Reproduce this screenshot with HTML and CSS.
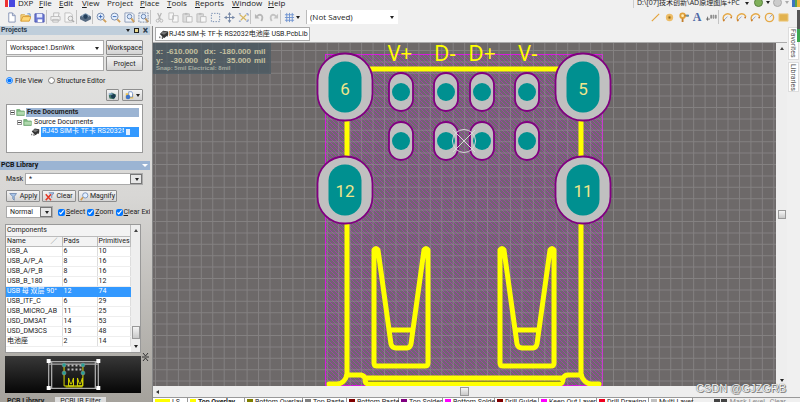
FILE: index.html
```html
<!DOCTYPE html>
<html lang="zh">
  <head>
    <meta charset="utf-8" />
    <title>PCB Library</title>
    <link rel="stylesheet" href="styles.css">
  </head>
  <body>
    <!-- icons -->
    <svg class="defs" width="0" height="0">
      <symbol id="i-new" viewBox="0 0 12 12"><path d="M3 1h4l3 3v7H3z" fill="#fff" stroke="#8291b5"/><path d="M7 1v3h3" fill="none" stroke="#8291b5"/></symbol>
      <symbol id="i-open" viewBox="0 0 12 12"><path d="M1 10V3h4l1 1h4v2" fill="#f5d98a" stroke="#d9a441"/><path d="M1 10l2-5h9l-2 5z" fill="#ffd777" stroke="#d79a32"/><path d="M8 2h3v3" fill="none" stroke="#5b8ccb"/></symbol>
      <symbol id="i-save" viewBox="0 0 12 12"><path d="M1 2h9l1 1v8H1z" fill="#6c79d4" stroke="#4a55ae"/><path d="M3 2h6v4H3z" fill="#e6eaff"/><path d="M4 8h5v3H4z" fill="#fff"/></symbol>
      <symbol id="i-print" viewBox="0 0 12 12"><path d="M4 5V1h6L9 5M1 5h10v4H1zM3 8h6v3H3z" fill="#f5f5f5" stroke="#b9b9b9"/></symbol>
      <symbol id="i-preview" viewBox="0 0 12 12"><path d="M1 1h6l2 2v8H1z" fill="#f7f7f7" stroke="#c0c0c0"/><circle cx="7" cy="7" r="2.5" fill="#eee" stroke="#aaa"/><path d="M9 9l2 2" stroke="#aaa" stroke-width="1.5"/></symbol>
      <symbol id="i-layers" viewBox="0 0 12 12"><path d="M0 5l6-3 6 3v3l-6 3-6-3z" fill="#566b82"/><path d="M1 4l5-3 5 3-5 3z" fill="#8fa8c0"/><circle cx="6" cy="5" r="2.5" fill="#24405c"/></symbol>
      <symbol id="i-zin" viewBox="0 0 12 12"><circle cx="5" cy="5" r="3.8" fill="#e6f1ff" stroke="#7186aa"/><path d="M3 5h4M5 3v4" stroke="#3967b5"/><path d="M8 8l3 3" stroke="#d0a05a" stroke-width="2"/></symbol>
      <symbol id="i-zout" viewBox="0 0 12 12"><circle cx="5" cy="5" r="3.8" fill="#e6f1ff" stroke="#7186aa"/><path d="M3 5h4" stroke="#3967b5"/><path d="M8 8l3 3" stroke="#d0a05a" stroke-width="2"/></symbol>
      <symbol id="i-zfit" viewBox="0 0 12 12"><path d="M1 1h8l2 2v8H1z" fill="#eef3fa" stroke="#8c9cba"/><circle cx="6" cy="5" r="2.5" fill="#dbe9ff" stroke="#6580aa"/><path d="M8 7l3 4" stroke="#d0a05a" stroke-width="2"/></symbol>
      <symbol id="i-zsel" viewBox="0 0 12 12"><path d="M1 1h10v10H1z" fill="#eef3fa" stroke="#7687a5" stroke-dasharray="2 1"/><circle cx="6" cy="5" r="2.5" fill="#dbe9ff" stroke="#6580aa"/><path d="M8 7l3 4" stroke="#b99566" stroke-width="2"/></symbol>
      <symbol id="i-cut" viewBox="0 0 12 12"><path d="M4 1l3 7M8 1L5 8" stroke="#b5b5b5" stroke-width="1.3"/><circle cx="4" cy="9.500" r="1.6" fill="none" stroke="#b5b5b5"/><circle cx="8" cy="9.500" r="1.6" fill="none" stroke="#b5b5b5"/></symbol>
      <symbol id="i-copy" viewBox="0 0 12 12"><path d="M1 1h5v7H1zM5 4h6v7H5z" fill="#f7f7f7" stroke="#c0c0c0"/></symbol>
      <symbol id="i-paste" viewBox="0 0 12 12"><path d="M1 2h7v9H1z" fill="#ddd" stroke="#bcbcbc"/><path d="M5 5h6v6H5z" fill="#f8f8f8" stroke="#bcbcbc"/><path d="M3 1h3v2H3z" fill="#bbb"/></symbol>
      <symbol id="i-sel" viewBox="0 0 12 12"><path d="M1.500 1.500h9v9h-9z" fill="none" stroke="#6d87ad" stroke-dasharray="1.500 1.500"/></symbol>
      <symbol id="i-move" viewBox="0 0 12 12"><path d="M6 1v10M1 6h10" stroke="#7587a5"/><path d="M6 0l2 3H4zM6 12l2-3H4zM0 6l3-2v4zM12 6L9 4v4z" fill="#7587a5"/></symbol>
      <symbol id="i-desel" viewBox="0 0 12 12"><path d="M2 3l7 6M9 3L3 9" stroke="#d7b65e" stroke-width="1.2"/><path d="M1 2h2M9 2h2v2M9 10h2V8M1 10h2" fill="none" stroke="#6f87bb"/></symbol>
      <symbol id="i-undo" viewBox="0 0 12 12"><path d="M3 5c4-4 8-1 5 5" fill="none" stroke="#b7b7b7" stroke-width="2"/><path d="M1 2v5h5z" fill="#b7b7b7"/></symbol>
      <symbol id="i-redo" viewBox="0 0 12 12"><path d="M9 5C5 1 1 4 4 10" fill="none" stroke="#c3c3c3" stroke-width="2"/><path d="M11 2v5H6z" fill="#c3c3c3"/></symbol>
      <symbol id="i-grid" viewBox="0 0 12 12"><path d="M3 1v10M6 1v10M9 1v10M1 3h10M1 6h10M1 9h10" stroke="#6e93d0"/></symbol>
      <symbol id="i-line" viewBox="0 0 12 12"><path d="M2 10l8-8" stroke="#e3a33c" stroke-width="1.300"/></symbol>
      <symbol id="i-pad" viewBox="0 0 12 12"><circle cx="6" cy="6" r="3" fill="#d7a443" stroke="#edbd69" stroke-width="2"/><circle cx="6" cy="6" r="1" fill="#8a6a2b"/></symbol>
      <symbol id="i-via" viewBox="0 0 12 12"><circle cx="5" cy="4" r="2.500" fill="#fff0bb" stroke="#e1a13b" stroke-width="2"/><path d="M7 4h4M5 7v4" stroke="#c28030" stroke-width="2"/><path d="M9 3h3v2H9z" fill="#5b92b5"/></symbol>
      <symbol id="i-coord" viewBox="0 0 14 12"><path d="M2 5v5M0 8h5" stroke="#555"/><path d="M6 3h1v4H6zM9 3h1v4H9zM12 3h1v4h-1z" fill="none" stroke="#777"/></symbol>
      <symbol id="i-arc" viewBox="0 0 12 12"><path d="M2 10C-1 3 7-1 11 5" fill="none" stroke="#e5a947" stroke-width="1.500"/><path d="M2 9l4-4" stroke="#8da5c9"/><circle cx="2" cy="9" r="1" fill="#cb7d2d"/><circle cx="10" cy="6" r="1" fill="#cb7d2d"/></symbol>
      <symbol id="i-circle" viewBox="0 0 12 12"><circle cx="6" cy="6" r="4.500" fill="none" stroke="#e5a947" stroke-width="1.500"/><path d="M6 6l3-3" stroke="#8da5c9"/></symbol>
      <symbol id="i-fill" viewBox="0 0 12 12"><path d="M1 2h10v8H1z" fill="#e2b24e" stroke="#efcf8c"/></symbol>
      <symbol id="i-chip" viewBox="0 0 12 12"><path d="M1 6l4-4 6 1v4l-5 4z" fill="#333"/><path d="M2 5l3-2 5 1-4 3z" fill="#777"/><path d="M1 9v2M4 9v3M10 7v2" stroke="#222"/></symbol>
      <symbol id="i-folder" viewBox="0 0 12 12"><path d="M1 10V2h4l1 2h5v6z" fill="#7fb982" stroke="#6fa573"/><path d="M2 5h9v4H2z" fill="#b0d9ae"/></symbol>
      <symbol id="i-eye" viewBox="0 0 12 12"><path d="M1 6l4-4 6 3-3 6-6-1z" fill="#3d7463"/><circle cx="7" cy="7" r="3" fill="#193b52"/><path d="M1 4h5" stroke="#82a6cd" stroke-width="2"/></symbol>
      <symbol id="i-docs" viewBox="0 0 12 12"><path d="M1 3h4l1 1h5v6H1z" fill="#efc14c"/><path d="M5 1h4l1 2v5H5z" fill="#fff" stroke="#5f83c4"/><circle cx="4" cy="8" r="3" fill="#3f74c9"/></symbol>
      <symbol id="i-funnel" viewBox="0 0 12 12"><path d="M1 2h9L7 6v5L5 9V6z" fill="#a8c4e8" stroke="#6681aa"/></symbol>
      <symbol id="i-clear" viewBox="0 0 12 12"><path d="M5 1h7L9 5v3" fill="#a8c4e8" stroke="#6681aa"/><path d="M1 3l7 8M8 3l-7 8" stroke="#e33824" stroke-width="2"/></symbol>
      <symbol id="i-mag" viewBox="0 0 12 12"><circle cx="7" cy="4.500" r="3.500" fill="#e2efff" stroke="#607fae"/><path d="M4 7l-3 4" stroke="#d49a4c" stroke-width="2"/></symbol>
    </svg>

    <div class="app">
      <!-- menu -->
      <div class="menubar">
        <span class="logo"></span>
        <span class="m-dxp">DXP</span>
        <span class="m-file"><u>F</u>ile</span>
        <span class="m-edit"><u>E</u>dit</span>
        <span class="m-view"><u>V</u>iew</span>
        <span class="m-project">Pro<u>j</u>ect</span>
        <span class="m-place"><u>P</u>lace</span>
        <span class="m-tools"><u>T</u>ools</span>
        <span class="m-reports"><u>R</u>eports</span>
        <span class="m-window"><u>W</u>indow</span>
        <span class="m-help"><u>H</u>elp</span>
        <div class="nav">
          <span class="drop path"><select aria-label="Path"><option>D:\[07]技术创新\AD原理图库+PC</option></select></span>
          <button class="round green" aria-label="Back"></button><i class="caret"></i>
          <button class="round" aria-label="Forward"></button><i class="caret pale"></i>
          <span class="home"></span>
        </div>
      </div>

      <!-- toolbar -->
      <div class="toolbar">
        <button class="tb" aria-label="New"><svg><use href="#i-new"/></svg></button>
        <button class="tb" aria-label="Open"><svg><use href="#i-open"/></svg></button>
        <button class="tb" aria-label="Save"><svg><use href="#i-save"/></svg></button>
        <i class="sep"></i>
        <button class="tb" aria-label="Print"><svg><use href="#i-print"/></svg></button>
        <button class="tb" aria-label="Preview"><svg><use href="#i-preview"/></svg></button>
        <i class="sep"></i>
        <button class="tb" aria-label="Layers"><svg><use href="#i-layers"/></svg></button>
        <i class="sep"></i>
        <button class="tb" aria-label="Zoom in"><svg><use href="#i-zin"/></svg></button>
        <button class="tb" aria-label="Zoom out"><svg><use href="#i-zout"/></svg></button>
        <button class="tb" aria-label="Fit"><svg><use href="#i-zfit"/></svg></button>
        <button class="tb" aria-label="Zoom area"><svg><use href="#i-zsel"/></svg></button>
        <i class="sep"></i>
        <button class="tb" aria-label="Cut"><svg><use href="#i-cut"/></svg></button>
        <button class="tb" aria-label="Copy"><svg><use href="#i-copy"/></svg></button>
        <button class="tb" aria-label="Paste"><svg><use href="#i-paste"/></svg></button>
        <button class="tb" aria-label="Paste array"><svg><use href="#i-paste"/></svg></button>
        <button class="tb" aria-label="Select"><svg><use href="#i-sel"/></svg></button>
        <button class="tb" aria-label="Move"><svg><use href="#i-move"/></svg></button>
        <button class="tb" aria-label="Deselect"><svg><use href="#i-desel"/></svg></button>
        <i class="sep"></i>
        <button class="tb" aria-label="Undo"><svg><use href="#i-undo"/></svg></button>
        <button class="tb" aria-label="Redo"><svg><use href="#i-redo"/></svg></button>
        <i class="sep"></i>
        <button class="tb" aria-label="Grid"><svg><use href="#i-grid"/></svg></button>
        <i class="caret"></i>
        <span class="drop saved"><select aria-label="Filter"><option>(Not Saved)</option></select></span>
        <div class="draw">
          <button class="tb" aria-label="Line"><svg><use href="#i-line"/></svg></button>
          <button class="tb" aria-label="Pad"><svg><use href="#i-pad"/></svg></button>
          <button class="tb" aria-label="Via"><svg><use href="#i-via"/></svg></button>
          <button class="tb letter">A</button>
          <button class="tb" aria-label="Coordinate"><svg><use href="#i-coord"/></svg></button>
          <i class="sep"></i>
          <button class="tb" aria-label="Arc centre"><svg><use href="#i-arc"/></svg></button>
          <button class="tb" aria-label="Arc edge"><svg><use href="#i-arc"/></svg></button>
          <button class="tb" aria-label="Arc any"><svg><use href="#i-arc"/></svg></button>
          <button class="tb" aria-label="Circle"><svg><use href="#i-circle"/></svg></button>
          <button class="tb" aria-label="Fill"><svg><use href="#i-fill"/></svg></button>
        </div>
      </div>

      <div class="main">
        <!-- left panels -->
        <div class="side">
          <div class="title">Projects <span class="tools"><i class="caret"></i><i class="pin"></i><b>×</b></span></div>
          <div class="projects">
            <div class="line">
              <span class="drop box grow"><select aria-label="Workspace"><option>Workspace1.DsnWrk</option></select></span>
              <button class="btn wide">Workspace</button>
            </div>
            <div class="line">
              <input class="box grow" type="text" aria-label="Project name">
              <button class="btn wide">Project</button>
            </div>
            <div class="radios">
              <label><input type="radio" name="view" checked>File View</label>
              <label><input type="radio" name="view">Structure Editor</label>
            </div>
            <div class="minis">
              <button class="btn mini" aria-label="Show"><svg><use href="#i-eye"/></svg></button>
              <button class="btn mini long" aria-label="Documents"><svg><use href="#i-docs"/></svg><i class="caret"></i></button>
            </div>
            <div class="tree">
              <div class="node top"><i class="minus"></i><svg><use href="#i-folder"/></svg><span class="name">Free Documents</span></div>
              <div class="node sub"><i class="minus"></i><svg><use href="#i-folder"/></svg><span class="name">Source Documents</span></div>
              <div class="node leaf"><svg><use href="#i-chip"/></svg><span class="name"><span class="clip">RJ45 SIM卡 TF卡 RS2032电</span><i class="doc"></i></span></div>
            </div>
          </div>

          <div class="title active">PCB Library <span class="tools"><i class="caret light"></i></span></div>
          <div class="library">
            <div class="mask"><label for="mask">Mask</label><span class="drop box framed"><input id="mask" type="text" value="*"></span></div>
            <div class="actions">
              <button class="btn"><svg><use href="#i-funnel"/></svg>Apply</button>
              <button class="btn"><svg><use href="#i-clear"/></svg>Clear</button>
              <button class="btn big"><svg><use href="#i-mag"/></svg>Magnify</button>
            </div>
            <div class="opts">
              <span class="drop box framed"><select aria-label="Mode"><option>Normal</option></select></span>
              <label><input type="checkbox" checked><span><u>S</u>elect</span></label>
              <label><input type="checkbox" checked><span><u>Z</u>oom</span></label>
              <label><input type="checkbox" checked><span><u>C</u>lear Exi</span></label>
            </div>
            <div class="list">
              <table>
                <colgroup><col class="c1"><col class="c2"><col></colgroup>
                <thead>
                  <tr><th colspan="3">Components</th></tr>
                  <tr><th>Name<span class="sort">∕</span></th><th>Pads</th><th>Primitives</th></tr>
                </thead>
                <tbody>
                  <tr><td>USB_A</td><td>6</td><td>10</td></tr>
                  <tr><td>USB_A/P_A</td><td>8</td><td>16</td></tr>
                  <tr><td>USB_A/P_B</td><td>8</td><td>16</td></tr>
                  <tr><td>USB_B_180</td><td>6</td><td>12</td></tr>
                  <tr class="on"><td>USB 母 双层 90°</td><td>12</td><td>74</td></tr>
                  <tr><td>USB_ITF_C</td><td>6</td><td>29</td></tr>
                  <tr><td>USB_MICRO_AB</td><td>11</td><td>25</td></tr>
                  <tr><td>USD_DM3AT</td><td>14</td><td>53</td></tr>
                  <tr><td>USD_DM3CS</td><td>13</td><td>48</td></tr>
                  <tr><td>电池座</td><td>2</td><td>14</td></tr>
                </tbody>
              </table>
              <div class="vbar"><i class="caret up"></i><i class="thumb"></i><i class="caret"></i></div>
            </div>
            <div class="splitter"><svg viewBox="0 0 7 8"><path d="M1 0l2.500 3L6 0M1 8l2.500-3L6 8M0 4h7" fill="none" stroke="#333"/></svg></div>
            <div class="preview">
              <svg viewBox="0 0 137 37">
                <path d="M44 5.500h50v27H44zM47 5.500v27M91 5.500v27M44 8h50" fill="none" stroke="#aaa" stroke-width="1.300"/>
                <path d="M59.500 8v22h19V8M61 31h17M64 22v8h5v-8M73 22v8h5v-8M64 22l2 6h1l2-6M73 22l2 6h1l2-6" fill="none" stroke="#d8d800"/>
                <path d="M63 9.500h14M63 13.500h14" stroke="#bbb" stroke-width="2" stroke-dasharray="2 2"/>
                <g fill="#27a096" stroke="#999" stroke-width=".5"><circle cx="59.500" cy="9" r="2"/><circle cx="78.500" cy="9" r="2"/><circle cx="59.500" cy="17" r="2"/><circle cx="78.500" cy="17" r="2"/></g>
                <path d="M42 3h4v4h-4zM92 3h4v4h-4zM42 30h4v4h-4zM92 30h4v4h-4z" fill="#fff"/>
              </svg>
            </div>
          </div>
          <div class="sidetabs"><span class="on">PCB Library</span><span>PCBLIB Filter</span></div>
        </div>

        <!-- editor -->
        <div class="editor">
          <div class="tabs"><span class="tab"><svg><use href="#i-chip"/></svg>RJ45 SIM卡 TF卡 RS2032电池座 USB.PcbLib</span></div>
          <div class="work">
            <div class="canvas">
              <svg class="pcb" viewBox="153 43 623 343" preserveAspectRatio="xMinYMin slice">
                <defs>
                  <pattern id="hatch" width="4" height="4" patternUnits="userSpaceOnUse"><path d="M-1-1l6 6M-1 3l2 2M3-1l2 2" stroke="#b52cbd" stroke-width=".7"/></pattern>
                  <g id="big"><rect x="-27.500" y="-33.500" width="55" height="67" rx="27" fill="#c0c0c0" stroke="#800080" stroke-width="1.800"/><rect x="-16.500" y="-25.500" width="33" height="51" rx="16" fill="#009090"/></g>
                  <g id="small"><rect x="-12" y="-19" width="24" height="38" rx="12" fill="#c0c0c0" stroke="#800080" stroke-width="1.800"/><circle r="9" fill="#009090"/></g>
                  <path id="fork" d="M378 250Q376 247 374 250V363Q374 366 377 366H425Q428 366 428 363V250Q426 247 424 250L411 344Q410 348 407 348H396Q392 348 391 344ZM391 330H411"/>
                </defs>
                <rect x="153" y="43" width="623" height="343" fill="#6d6969"/>
                <rect x="325.500" y="54.500" width="277" height="331" fill="#6f686f"/>
                <rect x="325.500" y="54.500" width="277" height="331" fill="url(#hatch)" stroke="#d61ade"/>
                <!-- grid: one wide dashed stroke each way -->
                <g class="grid">
                  <path d="M155 214.500H776" stroke-width="343" stroke-dasharray="1 10.450"/>
                  <path d="M464.500 50V386" stroke-width="623" stroke-dasharray="1 10.400"/>
                </g>
                <g fill="none" stroke="#ff0" stroke-width="5" stroke-linecap="round" stroke-linejoin="round">
                  <path d="M369 69H560"/>
                  <path d="M347 118V374C346 380 342 384 337 384H329"/>
                  <path d="M581 118V374C582 380 587 384 591 384H599"/>
                  <path d="M347 375H361Q365 376 365 379Q365 384 369 384H560Q563 383 563 379Q564 375 568 375H581M366 378H562"/>
                  <use href="#fork"/>
                  <use href="#fork" x="126"/>
                </g>
                <path d="M368 381.500H561" stroke="#77770a" stroke-width=".6"/>
                <use href="#big" x="345" y="87"/><use href="#big" x="583" y="87"/>
                <use href="#big" x="345" y="190"/><use href="#big" x="583" y="190"/>
                <use href="#small" x="401" y="92"/><use href="#small" x="446" y="92"/><use href="#small" x="482" y="92"/><use href="#small" x="527" y="92"/>
                <use href="#small" x="401" y="141"/><use href="#small" x="446" y="141"/><use href="#small" x="482" y="141"/><use href="#small" x="527" y="141"/>
                <g fill="none" stroke="#d8d8d8"><circle cx="464" cy="141" r="11.500"/><path d="M453 130l22 22M475 130l-22 22"/></g>
                <g class="num"><text x="345" y="95">6</text><text x="583" y="95">5</text><text x="345" y="197">12</text><text x="583" y="197">11</text></g>
                <g class="pin-name"><text x="400" y="61">V+</text><text x="445" y="61">D-</text><text x="482" y="61">D+</text><text x="528" y="61">V-</text></g>
              </svg>
              <div class="hud">
                <div class="xy"><span>x:</span><span class="v">-610.000</span><span>dx:</span><span class="v">-180.000</span><span>mil</span></div>
                <div class="xy"><span>y:</span><span class="v">-30.000</span><span>dy:</span><span class="v">35.000</span><span>mil</span></div>
                <div class="snap">Snap: 5mil Electrical: 8mil</div>
              </div>
            </div>
            <div class="vscroll"><i class="caret up"></i><i class="thumb"></i><i class="caret"></i></div>
          </div>
          <div class="hscroll"><i class="arrow"></i><i class="thumb"></i></div>
          <div class="layers">
            <span class="ls"><i class="sw yellow"></i>LS</span>
            <span class="on l-ov"><i class="sw yellow"></i>Top Overlay</span>
            <span class="l-bo"><i class="sw olive"></i>Bottom Overlay</span>
            <span class="l-tp"><i class="sw gray"></i>Top Paste</span>
            <span class="l-bp"><i class="sw maroon"></i>Bottom Paste</span>
            <span class="l-tp"><i class="sw purple"></i>Top Solder</span>
            <span class="l-bp"><i class="sw fuchsia"></i>Bottom Solder</span>
            <span class="l-tp"><i class="sw maroon"></i>Drill Guide</span>
            <span class="l-bo"><i class="sw fuchsia"></i>Keep Out Layer</span>
            <span class="l-bp"><i class="sw red"></i>Drill Drawing</span>
            <span class="l-tp"><i class="sw silver"></i>Multi Layer</span>
            <div class="level"><i class="sw dark"></i><i class="sw dark"></i><button>Mask Level</button><button>Clear</button></div>
          </div>
        </div>

        <div class="dock"><span>Favorites</span><span>Libraries</span></div>
      </div>
      <div class="gadget"></div>
      <div class="mark">CSDN @GJZGRB</div>
    </div>
  </body>
</html>
```
FILE: styles.css
```css
* {
  box-sizing: border-box;
}
body {
  margin: 0;
  height: 100vh;
  overflow: hidden;
  background: #f0f0f0;
  color: #222;
  font: 7px/10px Roboto, "Noto Sans CJK SC", sans-serif;
}
button, input, select {
  font: inherit;
  color: inherit;
  margin: 0;
  padding: 0;
}
button, select {
  white-space: nowrap;
}
.defs {
  position: absolute;
}
.app {
  position: relative;
  display: flex;
  flex-direction: column;
  height: 100vh;
  overflow: hidden;
}
.caret {
  flex: none;
  width: 0;
  border: 2px solid transparent;
  border-top: 3px solid #222;
  border-bottom: 0;
}
.caret.up {
  border-top: 0;
  border-bottom: 3px solid #444;
}
.caret.light {
  border-width: 3px;
  border-top-color: #fff;
  border-bottom: 0;
}
.caret.pale {
  border-top-color: #aaa;
}

/* drop-downs */
.drop {
  position: relative;
  display: flex;
}
.drop select, .drop input {
  appearance: none;
  width: 100%;
  min-width: 0;
  border: 0;
  outline: 0;
  background: transparent;
  padding: 0 12px 0 3px;
}
.drop::after {
  content: "";
  position: absolute;
  right: 4px;
  top: 50%;
  margin-top: -1px;
  border: 2px solid transparent;
  border-top: 3px solid #222;
  border-bottom: 0;
  pointer-events: none;
}
.drop.framed::before {
  content: "";
  position: absolute;
  right: 0;
  top: 0;
  bottom: 0;
  width: 10px;
  border: 1px solid #777;
  background: #e6e6e6;
  pointer-events: none;
}
.drop.framed::after {
  right: 3px;
}

/* menu */
.menubar {
  display: flex;
  flex: none;
  align-items: center;
  height: 11px;
  margin-top: -3px;
  padding-left: 5px;
  font-family: "Open Sans", "Noto Sans CJK SC", sans-serif;
  font-size: 8px;
}
.menubar > span {
  flex: none;
}
.logo {
  width: 10px;
  height: 8px;
  margin-right: 3px;
  background: linear-gradient(90deg, #e33 30%, #fff 30%, #fff 45%, #4848e0 45%);
}
.m-dxp { width: 21px; }
.m-file { width: 20px; }
.m-edit { width: 23px; }
.m-view { width: 25px; }
.m-project { width: 33px; }
.m-place { width: 27px; }
.m-tools { width: 28px; }
.m-reports { width: 37px; }
.m-window { width: 36px; }
.nav {
  display: flex;
  align-items: center;
  gap: 3px;
  margin-left: auto;
}
.path {
  width: 118px;
  border-left: 1px solid #ccc;
  font-size: 7px;
}
.path select {
  padding-right: 7px;
}
.path::after {
  right: 2px;
}
.round {
  width: 9px;
  height: 9px;
  border: 1px solid #aaa;
  border-radius: 50%;
  background: #ccc;
}
.round.green {
  background: #7fb05a;
  border-color: #5a8040;
}
.home {
  width: 8px;
  height: 9px;
  background: linear-gradient(90deg, #3c74c0 40%, #59a34a 40%, #59a34a 65%, #e7b73a 65%);
}

/* toolbar */
.toolbar {
  display: flex;
  flex: none;
  align-items: center;
  height: 18px;
  padding-left: 4px;
}
.tb {
  display: flex;
  flex: none;
  align-items: center;
  justify-content: center;
  width: 14px;
  height: 14px;
  border: 0;
  background: none;
}
.tb svg {
  width: 11px;
  height: 11px;
}
.letter {
  color: #4d67a5;
  font: bold 12px/14px "Liberation Serif", serif;
}
.sep {
  flex: none;
  width: 2px;
  height: 14px;
  border-left: 1px solid #c4c4c4;
}
.saved {
  width: 92px;
  height: 14px;
  margin-left: 6px;
  border-left: 1px solid #bbb;
  background: #fff;
  font: 8px/12px "Open Sans", sans-serif;
}
.draw {
  display: flex;
  align-items: center;
  margin-left: auto;
  padding-right: 10px;
}

.main {
  display: flex;
  flex: 1;
  min-height: 0;
}

/* left panels */
.side {
  display: flex;
  flex: none;
  flex-direction: column;
  width: 153px;
  padding-right: 2px;
  border-right: 1px solid #888;
  background: linear-gradient(#e4e4e3, #d8d7d5 45%, #a5a29c);
}
.title {
  display: flex;
  flex: none;
  justify-content: space-between;
  height: 9px;
  padding: 0 2px 0 1px;
  background: #bfcedb;
  color: #2f4050;
  font-weight: bold;
  line-height: 9px;
}
.title.active {
  background: #9bb4d3;
  color: #111;
}
.tools {
  display: flex;
  align-items: center;
  gap: 4px;
  font-size: 10px;
}
.pin {
  width: 5px;
  height: 5px;
  border: 1px solid #222;
  background: #e8d98c;
}
.projects {
  height: 126px;
  padding: 5px 7px 0 6px;
}
.line {
  display: flex;
  gap: 2px;
  height: 16px;
}
.box {
  border: 1px solid #aaa;
  background: #fff;
}
.grow {
  flex: 1;
  min-width: 0;
  height: 15px;
}
.btn {
  display: flex;
  align-items: center;
  justify-content: center;
  border: 1px solid #8e8e8e;
  border-radius: 1px;
  background: linear-gradient(#f4f4f4, #d3d3d3);
}
.btn svg {
  width: 9px;
  height: 9px;
  margin-right: 2px;
}
.wide {
  width: 37px;
  height: 15px;
}
.radios {
  display: flex;
  gap: 5px;
  height: 17px;
}
label {
  display: flex;
  align-items: center;
}
.radios input {
  width: 7px;
  height: 7px;
  margin-right: 2px;
}
.minis {
  display: flex;
  justify-content: flex-end;
  gap: 3px;
  padding-bottom: 3px;
}
.mini {
  width: 13px;
  height: 12px;
}
.mini svg {
  margin: 0;
}
.mini.long {
  width: 21px;
  gap: 2px;
}
.tree {
  height: 49px;
  padding: 3px;
  border: 1px solid #999;
  background: #fff;
}
.node {
  display: flex;
  align-items: center;
  height: 9px;
  white-space: nowrap;
}
.node svg {
  flex: none;
  width: 9px;
  height: 9px;
  margin: 0 1px;
}
.node .name {
  flex: 1;
  padding-left: 1px;
  line-height: 9px;
}
.minus {
  width: 5px;
  height: 5px;
  border: 1px solid #999;
  background: linear-gradient(#fff 33%, #444 33%, #444 66%, #fff 66%);
}
.top .name {
  background: #9bb4d3;
  font-weight: bold;
}
.sub {
  height: 10px;
  padding-left: 7px;
}
.leaf {
  padding-left: 20px;
}
.leaf .name {
  display: flex;
  overflow: hidden;
  background: #3399ff;
  color: #fff;
}
.clip {
  width: 82px;
  overflow: hidden;
}
.doc {
  width: 4px;
  height: 6px;
  margin: 2px;
  background: #e3efff;
}

/* library */
.library {
  flex: 1;
  min-height: 0;
  padding: 3px 0 0 6px;
}
.mask {
  display: flex;
  gap: 3px;
  margin-right: 7px;
}
.mask label {
  width: 16px;
}
.mask .drop {
  flex: 1;
  height: 12px;
}
.actions {
  display: flex;
  gap: 2px;
  padding: 5px 0 4px;
}
.actions .btn {
  width: 34px;
  height: 12px;
}
.actions .big {
  width: 39px;
}
.big svg {
  margin-right: 1px;
}
.opts {
  display: flex;
  gap: 2px;
  overflow: hidden;
  white-space: nowrap;
}
.opts .drop {
  flex: none;
  width: 47px;
  height: 12px;
  margin-right: 3px;
}
.opts input {
  flex: none;
  width: 7px;
  height: 7px;
  margin-right: 1px;
}
.list {
  display: flex;
  height: 129px;
  margin: 6px 9px 0 -1px;
  border: 1px solid #999;
  background: #fff;
}
table {
  flex: 1;
  align-self: flex-start;
  border-collapse: collapse;
  table-layout: fixed;
  width: 0;
}
th, td {
  height: 10px;
  padding: 0 0 0 1px;
  border-right: 1px solid #ddd;
  border-bottom: 1px solid #eee;
  line-height: 9px;
  text-align: left;
  font-weight: normal;
  white-space: nowrap;
}
th {
  border-color: #bbb;
  background: #f3f3f3;
}
.c1 { width: 56px; }
.c2 { width: 35px; }
th[colspan] {
  height: 11px;
}
.sort {
  float: right;
  margin-right: 4px;
  color: #888;
}
tr.on td {
  border-color: #3399ff;
  background: #3399ff;
  color: #fff;
}
.vbar, .vscroll {
  display: flex;
  flex: none;
  flex-direction: column;
  align-items: center;
  width: 9px;
  padding: 4px 0;
  background: #eee;
}
.thumb {
  border: 1px solid #999;
  background: linear-gradient(#f5f5f5, #c8c8c8);
}
.vbar .thumb {
  width: 8px;
  height: 13px;
  margin: auto 0 6px;
}
.splitter {
  display: flex;
  justify-content: flex-end;
  height: 3px;
  padding-right: 1px;
}
.splitter svg {
  width: 7px;
  height: 8px;
}
.preview {
  height: 37px;
  margin: 0 9px 0 -1px;
  background: linear-gradient(#383838, #060606);
}
.preview svg {
  display: block;
  width: 100%;
  height: 100%;
}
.sidetabs {
  display: flex;
  flex: none;
  gap: 6px;
  height: 5px;
  margin-left: 2px;
  overflow: hidden;
  line-height: 9px;
}
.sidetabs span {
  padding: 0 5px;
  background: #ddd;
}
.sidetabs .on {
  background: none;
  font-weight: bold;
}

/* editor */
.editor {
  display: flex;
  flex: 1;
  flex-direction: column;
  min-width: 0;
}
.tabs {
  flex: none;
  height: 17px;
  padding: 1px 2px;
  border-bottom: 1px solid #aaa;
}
.tab {
  display: inline-flex;
  align-items: center;
  height: 14px;
  padding: 0 1px 0 3px;
  border: 1px solid #aaa;
  background: #fff;
}
.tab svg {
  width: 10px;
  height: 10px;
}
.work {
  display: flex;
  flex: 1;
  min-height: 0;
}
.canvas {
  position: relative;
  flex: 1;
  min-width: 0;
  overflow: hidden;
}
.pcb {
  display: block;
  width: 100%;
  height: 100%;
}
.grid {
  fill: none;
  stroke: #a09ea0;
  opacity: .45;
}
.num {
  fill: #efe68c;
  font: 17px Roboto, sans-serif;
  text-anchor: middle;
}
.pin-name {
  fill: #ff0;
  font: 21px "Noto Sans", sans-serif;
  text-anchor: middle;
}
.hud {
  position: absolute;
  left: 0;
  top: 0;
  width: 118px;
  height: 31px;
  padding: 4px 0 0 3px;
  background: rgba(72, 88, 98, .75);
  color: #c5c0a0;
  font: bold 8px/9px "Liberation Sans", sans-serif;
}
.xy {
  display: flex;
}
.xy span {
  width: 9px;
}
.xy .v {
  width: 33px;
  margin-right: 6px;
  text-align: right;
}
.xy span:nth-child(3) {
  width: 14px;
}
.xy .v:nth-child(4) {
  margin-right: 3px;
}
.snap {
  line-height: 7px;
  font-size: 6px;
  color: #a5aba0;
}
.vscroll {
  width: 11px;
}
.vscroll .thumb {
  width: 8px;
  height: 9px;
  margin: auto 0;
}
.hscroll {
  display: flex;
  flex: none;
  align-items: center;
  height: 11px;
  padding: 0 17px 0 3px;
  background: #eee;
}
.arrow {
  border: 2px solid transparent;
  border-left: 0;
  border-right: 3px solid #333;
}
.hscroll .thumb {
  width: 9px;
  height: 9px;
  margin: 0 auto;
}
.layers {
  display: flex;
  flex: none;
  height: 5px;
  margin-right: -13px;
  overflow: hidden;
  border-top: 1px solid #999;
  line-height: 9px;
  white-space: nowrap;
}
.layers > span {
  display: flex;
  flex: none;
  gap: 2px;
  padding-left: 2px;
  border-right: 1px solid #999;
  background: #fff;
}
.ls { width: 35px; }
.l-ov { width: 57px; }
.l-bo { width: 58px; }
.l-tp { width: 44px; }
.l-bp { width: 52px; }
.layers .on {
  font-weight: bold;
}
.sw {
  flex: none;
  width: 6px;
  height: 6px;
  margin-top: 1px;
}
.ls .sw { width: 15px; }
.yellow { background: #ff0; }
.olive { background: #808000; }
.gray { background: #808080; }
.maroon { background: #800000; }
.purple { background: #800080; }
.fuchsia { background: #f0f; }
.red { background: #f00020; }
.silver { background: #c0c0c0; }
.dark { background: #444; }
.level {
  display: flex;
  gap: 1px;
  margin-left: auto;
  padding-right: 12px;
  color: #888;
}
.level button {
  height: 9px;
  padding: 0 2px;
  border: 0;
  background: none;
}

.dock {
  display: flex;
  flex: none;
  flex-direction: column;
  gap: 2px;
  width: 13px;
  padding: 1px 1px 0;
}
.dock span {
  writing-mode: vertical-rl;
  width: 11px;
  padding: 1px 0;
  border: 1px solid #ddd;
  background: #fff;
  color: #555;
}
.gadget {
  position: absolute;
  right: 0;
  top: 10px;
  width: 3px;
  height: 32px;
  background: linear-gradient(#555 60%, #3fa650 60%);
}
.mark {
  position: absolute;
  right: 14px;
  bottom: 7px;
  color: #f4f4f4;
  font: 11px/14px "Liberation Sans", sans-serif;
  text-shadow: 0 0 1px #333, 1px 1px 0 #888;
}
```
